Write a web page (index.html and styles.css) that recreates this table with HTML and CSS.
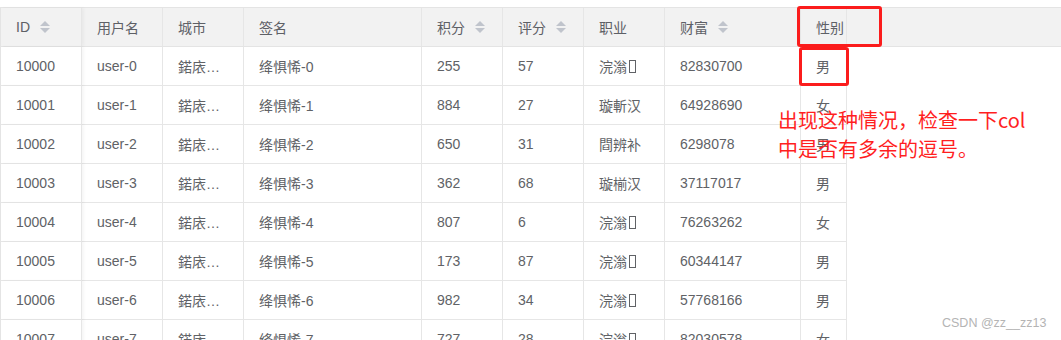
FILE: index.html
```html
<!DOCTYPE html>
<html lang="zh">
<head>
<meta charset="utf-8">
<title>Table</title>
<link rel="stylesheet" href="styles.css">
</head>
<body>
<div class="page">
  <div class="thead">
    <div class="grid">
      <div class="th first">ID <span class="sort"><i class="up"></i><i class="down"></i></span></div>
      <div class="th">用户名</div>
      <div class="th">城市</div>
      <div class="th">签名</div>
      <div class="th">积分 <span class="sort"><i class="up"></i><i class="down"></i></span></div>
      <div class="th">评分 <span class="sort"><i class="up"></i><i class="down"></i></span></div>
      <div class="th">职业</div>
      <div class="th">财富 <span class="sort"><i class="up"></i><i class="down"></i></span></div>
      <div class="th">性别</div>
    </div>
  </div>
  <div class="grid tbody">
    <div class="td first">10000</div><div class="td">user-0</div><div class="td">鍩庡…</div><div class="td">绛惧悕-0</div><div class="td">255</div><div class="td">57</div><div class="td">浣滃<span class="tofu"></span></div><div class="td">82830700</div><div class="td">男</div>
    <div class="td first">10001</div><div class="td">user-1</div><div class="td">鍩庡…</div><div class="td">绛惧悕-1</div><div class="td">884</div><div class="td">27</div><div class="td">璇斬汉</div><div class="td">64928690</div><div class="td">女</div>
    <div class="td first">10002</div><div class="td">user-2</div><div class="td">鍩庡…</div><div class="td">绛惧悕-2</div><div class="td">650</div><div class="td">31</div><div class="td">閰辨补</div><div class="td">6298078</div><div class="td">男</div>
    <div class="td first">10003</div><div class="td">user-3</div><div class="td">鍩庡…</div><div class="td">绛惧悕-3</div><div class="td">362</div><div class="td">68</div><div class="td">璇椾汉</div><div class="td">37117017</div><div class="td">男</div>
    <div class="td first">10004</div><div class="td">user-4</div><div class="td">鍩庡…</div><div class="td">绛惧悕-4</div><div class="td">807</div><div class="td">6</div><div class="td">浣滃<span class="tofu"></span></div><div class="td">76263262</div><div class="td">女</div>
    <div class="td first">10005</div><div class="td">user-5</div><div class="td">鍩庡…</div><div class="td">绛惧悕-5</div><div class="td">173</div><div class="td">87</div><div class="td">浣滃<span class="tofu"></span></div><div class="td">60344147</div><div class="td">男</div>
    <div class="td first">10006</div><div class="td">user-6</div><div class="td">鍩庡…</div><div class="td">绛惧悕-6</div><div class="td">982</div><div class="td">34</div><div class="td">浣滃<span class="tofu"></span></div><div class="td">57768166</div><div class="td">男</div>
    <div class="td first">10007</div><div class="td">user-7</div><div class="td">鍩庡…</div><div class="td">绛惧悕-7</div><div class="td">727</div><div class="td">28</div><div class="td">浣滃<span class="tofu"></span></div><div class="td">82030578</div><div class="td">女</div>
  </div>

  <div class="mark mark-head"></div>
  <div class="mark mark-cell"></div>
  <div class="note">出现这种情况，检查一下col<br>中是否有多余的逗号。</div>
  <div class="watermark">CSDN @zz__zz13</div>
</div>
</body>
</html>
```

FILE: styles.css
```css
html, body {
  margin: 0;
  padding: 0;
  height: 340px;
  overflow: hidden;
  background: #fff;
}

.page {
  position: relative;
  padding-top: 7px;
  font-family: "Liberation Sans", Arial, "Noto Sans CJK SC", sans-serif;
  font-size: 14px;
  color: #606266;
}

.grid {
  display: grid;
  grid-template-columns: 81px 81px 81px 178px 81px 81px 81px 136px 46px;
  width: 846px;
  box-sizing: border-box;
}

.thead {
  background: #f2f2f2;
  border-top: 1px solid #e4e4e4;
  border-bottom: 1px solid #e4e4e4;
  border-left: 1px solid #e4e4e4;
}

.tbody {
  border-left: 1px solid #e4e4e4;
}

.th, .td {
  box-sizing: border-box;
  display: flex;
  align-items: center;
  padding-left: 15px;
  border-right: 1px solid #e6e6e6;
  white-space: nowrap;
  overflow: hidden;
}

.th {
  height: 38px;
  color: #5e6066;
  background: #f2f2f2;
}

.td {
  height: 39px;
  border-bottom: 1px solid #e6e6e6;
  background: #fff;
}

.first {
  position: relative;
  z-index: 1;
  box-shadow: 2px 0 3px rgba(0, 0, 0, 0.04);
}

.sort {
  display: inline-flex;
  flex-direction: column;
  gap: 2px;
  margin-left: 10px;
}

.sort i {
  display: block;
  width: 0;
  height: 0;
  border-left: 5px solid transparent;
  border-right: 5px solid transparent;
}

.sort .up {
  border-bottom: 5px solid #c0c4cc;
}

.sort .down {
  border-top: 5px solid #c0c4cc;
}

.tofu {
  display: inline-block;
  width: 7px;
  height: 13px;
  margin-left: 2px;
  border: 1px solid #606266;
  box-sizing: border-box;
}

.mark {
  position: absolute;
  box-sizing: border-box;
  border: 3px solid #fb1c1c;
  border-radius: 3px;
}

.mark-head {
  left: 797px;
  top: 6px;
  width: 85px;
  height: 41px;
}

.mark-cell {
  left: 799px;
  top: 47px;
  width: 50px;
  height: 39px;
}

.note {
  position: absolute;
  left: 778px;
  top: 105px;
  font-family: "Noto Sans CJK SC", "Liberation Sans", sans-serif;
  font-size: 20px;
  line-height: 29px;
  color: #ff1f1f;
  white-space: nowrap;
}

.watermark {
  position: absolute;
  left: 942px;
  top: 316px;
  font-family: "Liberation Sans", Arial, sans-serif;
  font-size: 12.5px;
  color: #b4b4b4;
  white-space: nowrap;
}
```
